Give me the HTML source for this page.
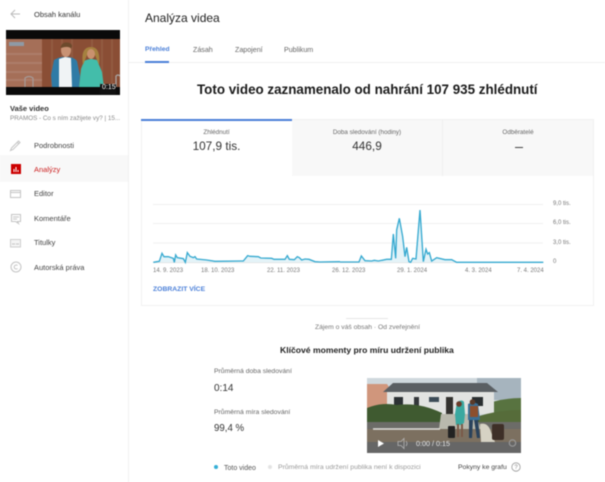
<!DOCTYPE html>
<html><head><meta charset="utf-8">
<style>
html,body{margin:0;padding:0;background:#fff}
#p{position:relative;width:605px;height:482px;overflow:hidden;background:#fff;font-family:"Liberation Sans",sans-serif;color:#333;filter:blur(.5px)}
.t{position:absolute;white-space:nowrap;line-height:1}
.b{position:absolute}
svg{position:absolute;overflow:visible}
</style></head><body><div id="p">
<div class="b" style="left:128px;top:0;width:1px;height:482px;background:#f1f1f1"></div>
<div class="b" style="left:0;top:155px;width:128px;height:27px;background:#f8f8f8"></div>
<svg style="left:0;top:0" width="30" height="30"><path d="M20 14H11.500M15 10l-4 4 4 4" fill="none" stroke="#bbb" stroke-width="1"/></svg>
<div class="t" style="left:34px;top:10.500px;font-size:7.500px;color:#333">Obsah kanálu</div>

<svg style="left:6px;top:30px" width="114" height="65" viewBox="0 0 114 65">
<rect width="114" height="65" fill="#0a0a0a"/>
<rect y="9" width="36" height="48" fill="#a56f58"/>
<rect x="36" y="9" width="78" height="48" fill="#8a4e35"/>
<path d="M46 9v48M56 9v48M66 9v48M86 9v48M96 9v48M106 9v48" stroke="#925a41" stroke-width="2"/>
<rect x="3" y="12" width="15" height="4" fill="#8f9aa5"/>
<path d="M0 24h36M0 33h36M0 42h36M0 50h36" stroke="#b5897a" stroke-width="2" opacity=".55"/>
<path d="M19 57V48q4-3 8 0v9" fill="none" stroke="#a59a98" stroke-width="1.200"/>
<path d="M110 57V46q2-2 4 0" fill="none" stroke="#aaa" stroke-width="1.200"/>
<path d="M46 57l-1-12 3-15q5-3 9-3h6q6 1 8 4l3 15-1 11z" fill="#2f7ba6"/>
<path d="M53 29l6-2 6 1 1 29H53z" fill="#f0f3f5"/>
<ellipse cx="60" cy="20" rx="5" ry="7" fill="#c89274"/>
<path d="M54.500 18q1-6 6-5.500 5.500 0 5.500 4l-1 2q-3-3-10-.5z" fill="#6d4a2c"/>
<path d="M73 57l2-18 3-8q4-2 8-2l5 1 5 12 2 15h-3l-1-5 0 5z" fill="#43bdaa"/>
<path d="M77 35q-3-18 8-18 10 0 8 18l-4-10h-8z" fill="#a5813f"/>
<ellipse cx="85" cy="24" rx="4" ry="5" fill="#c9916e"/>
<rect x="94" y="54" width="16" height="11" rx="1" fill="#111"/>
</svg>
<div class="t" style="left:102px;top:83.500px;font-size:7px;color:#fff">0:15</div>

<div class="t" style="left:10px;top:105px;font-size:7.500px;font-weight:bold;color:#333">Vaše video</div>
<div class="t" style="left:10px;top:115.500px;font-size:6.300px;color:#8a8a8a">PRAMOS - Co s ním zažijete vy? | 15...</div>

<svg style="left:0;top:130px" width="30" height="150">
<path d="M11.500 18l7-7 1.500 1.500-7 7-2.500 1zM17 12l1.500 1.500" fill="none" stroke="#c4c4c4" stroke-width="1"/>
<rect x="11" y="34" width="10" height="10" fill="#cc0000"/><path d="M14 42v-3M16 42v-5M18 42v-2" stroke="#fff" stroke-width="1"/>
<path d="M10.500 60.500h10v7h-10zM10.500 60.500h10v2h-10z" fill="none" stroke="#c4c4c4"/>
<path d="M11.500 84.500h9v7h-3l1 2-3-2h-4zM13 87h6M13 89h4" fill="none" stroke="#c4c4c4"/>
<rect x="10.500" y="109.500" width="10" height="7.500" fill="#f4f4f4" stroke="#cecece"/><path d="M12 114h3M16 114h3" stroke="#c4c4c4"/>
<circle cx="16" cy="137" r="5" fill="none" stroke="#c4c4c4"/><path d="M17.500 135.500a2 2 0 1 0 0 3" fill="none" stroke="#b4b4b4" stroke-width=".8"/>
</svg>
<div class="t" style="left:34px;top:141.500px;font-size:7.500px;color:#444">Podrobnosti</div>
<div class="t" style="left:34px;top:165.500px;font-size:7.500px;color:#cc2222">Analýzy</div>
<div class="t" style="left:34px;top:190px;font-size:7.500px;color:#444">Editor</div>
<div class="t" style="left:34px;top:214.500px;font-size:7.500px;color:#444">Komentáře</div>
<div class="t" style="left:34px;top:239px;font-size:7.500px;color:#444">Titulky</div>
<div class="t" style="left:34px;top:263.500px;font-size:7.500px;color:#444">Autorská práva</div>

<div class="t" style="left:145px;top:12px;font-size:12px;color:#222">Analýza videa</div>
<div class="t" style="left:145px;top:46.500px;font-size:6.700px;color:#4a7fd8;font-weight:bold">Přehled</div>
<div class="t" style="left:193px;top:46.500px;font-size:7.100px;color:#666">Zásah</div>
<div class="t" style="left:235px;top:46.500px;font-size:7.100px;color:#666">Zapojení</div>
<div class="t" style="left:284px;top:46.500px;font-size:7.100px;color:#666">Publikum</div>
<div class="b" style="left:129px;top:62px;width:476px;height:1px;background:#efefef"></div>
<div class="b" style="left:145px;top:60.500px;width:24px;height:2px;background:#4a7fd8"></div>

<div class="t" style="left:197px;top:82.500px;font-size:13.400px;font-weight:bold;color:#1a1a1a">Toto video zaznamenalo od nahrání 107 935 zhlédnutí</div>

<div class="b" style="left:141px;top:119px;width:453px;height:187px;border:1px solid #f1f1f1;box-sizing:border-box"></div>
<div class="b" style="left:292px;top:120px;width:301px;height:56px;background:#f8f8f8"></div>
<div class="b" style="left:442px;top:120px;width:1px;height:56px;background:#f0f0f0"></div>
<div class="b" style="left:141px;top:119px;width:151px;height:2px;background:#4a7fd8"></div>
<div class="t" style="left:141px;width:151px;text-align:center;top:130px;font-size:6.300px;color:#666">Zhlédnutí</div>
<div class="t" style="left:141px;width:151px;text-align:center;top:141px;font-size:11.800px;color:#333">107,9 tis.</div>
<div class="t" style="left:292px;width:150px;text-align:center;top:130px;font-size:6.300px;color:#666">Doba sledování (hodiny)</div>
<div class="t" style="left:292px;width:150px;text-align:center;top:141px;font-size:11.800px;color:#333">446,9</div>
<div class="t" style="left:443px;width:150px;text-align:center;top:130px;font-size:6.300px;color:#666">Odběratelé</div>
<div class="b" style="left:514.500px;top:146.500px;width:8px;height:1.300px;background:#444"></div>

<svg style="left:0;top:0" width="605" height="482">
<path d="M153 204.500H543M153 223.500H543M153 243H543" stroke="#f0f0f0" stroke-width="1"/>
<path d="M153 262.500H543" stroke="#ddd" stroke-width="1"/>
<g transform="translate(140,190) scale(.33333)">
<polygon fill="#e4f3f8" points="40,217 58,214 66,190 72,200 85,200 100,205 103,217 107,195 112,203 130,206 136,217 142,188 150,199 160,203 165,200 170,207 200,210 225,214 300,213 310,213 323,197 330,199 355,200 362,204 395,205 402,208 435,208 442,197 448,208 463,209 472,200 478,203 485,210 495,207 507,208 525,215 540,216 600,215 600,217 40,217"/>
<polyline fill="none" stroke="#35a9d0" stroke-width="4" points="40,217 58,214 66,190 72,200 85,200 100,205 103,217 107,195 112,203 130,206 136,217 142,188 150,199 160,203 165,200 170,207 200,210 225,214 300,213 310,213 323,197 330,199 355,200 362,204 395,205 402,208 435,208 442,197 448,208 463,209 472,200 478,203 485,210 495,207 507,208 525,215 540,216 600,215"/>
</g>
<g transform="translate(340,190) scale(.33333)">
<polygon fill="#e4f3f8" points="0,216 57,216 64,198 75,212 95,213 103,211 115,213 140,208 154,208 160,132 167,205 170,120 178,85 188,140 195,200 200,172 207,215 212,217 218,205 228,207 240,60 250,215 258,178 263,192 268,188 275,213 290,203 315,209 335,209 350,217 0,217"/>
<polyline fill="none" stroke="#35a9d0" stroke-width="4" points="0,216 57,216 64,198 75,212 95,213 103,211 115,213 140,208 154,208 160,132 167,205 170,120 178,85 188,140 195,200 200,172 207,215 212,217 218,205 228,207 240,60 250,215 258,178 263,192 268,188 275,213 290,203 315,209 335,209 350,217 610,217"/>
</g>
</svg>
<div class="t" style="left:553px;top:201px;font-size:6px;color:#777">9,0 tis.</div>
<div class="t" style="left:553px;top:220px;font-size:6px;color:#777">6,0 tis.</div>
<div class="t" style="left:553px;top:240px;font-size:6px;color:#777">3,0 tis.</div>
<div class="t" style="left:553px;top:259px;font-size:6px;color:#777">0</div>
<div class="t" style="left:153px;top:268px;font-size:6px;color:#777">14. 9. 2023</div>
<div class="t" style="left:201px;top:268px;font-size:6px;color:#777">18. 10. 2023</div>
<div class="t" style="left:267px;top:268px;font-size:6px;color:#777">22. 11. 2023</div>
<div class="t" style="left:332px;top:268px;font-size:6px;color:#777">26. 12. 2023</div>
<div class="t" style="left:397px;top:268px;font-size:6px;color:#777">29. 1. 2024</div>
<div class="t" style="left:465px;top:268px;font-size:6px;color:#777">4. 3. 2024</div>
<div class="t" style="left:517px;top:268px;font-size:6px;color:#777">7. 4. 2024</div>
<div class="t" style="left:153px;top:287px;font-size:6.800px;font-weight:bold;color:#4a7fd8">ZOBRAZIT VÍCE</div>

<div class="b" style="left:346px;top:318px;width:42px;height:1px;background:#e6e6e6"></div>
<div class="t" style="left:315px;top:325px;font-size:6.750px;color:#777">Zájem o váš obsah · Od zveřejnění</div>
<div class="t" style="left:280px;top:345.500px;font-size:8.600px;font-weight:bold;color:#222">Klíčové momenty pro míru udržení publika</div>

<div class="t" style="left:214px;top:368.500px;font-size:6.800px;color:#666">Průměrná doba sledování</div>
<div class="t" style="left:214px;top:384px;font-size:10px;color:#333">0:14</div>
<div class="t" style="left:214px;top:409.500px;font-size:6.800px;color:#666">Průměrná míra sledování</div>
<div class="t" style="left:214px;top:424px;font-size:9.700px;color:#333">99,4 %</div>

<svg style="left:367px;top:378px" width="154" height="75" viewBox="0 0 154 75">
<rect width="154" height="75" fill="#cfd8dd"/>
<rect x="110" y="0" width="44" height="22" fill="#a6b4be"/>
<path d="M125 24q15-4 29-4v24h-29z" fill="#587340"/>
<path d="M0 6h20l4 6-3 22H0z" fill="#d0967c"/>
<path d="M16 14L26 5H120L131 14z" fill="#5a5f63"/>
<rect x="20" y="14" width="107" height="22" fill="#e2e3e1"/>
<rect x="27" y="19" width="9" height="9" fill="#2c3134"/>
<rect x="47" y="19" width="5" height="9" fill="#33373a"/>
<rect x="62" y="19" width="10" height="5" fill="#3d4c58"/>
<rect x="79" y="19" width="7" height="17" fill="#33322f"/>
<rect x="105" y="19" width="11" height="9" fill="#2a2e30"/>
<rect y="40" width="154" height="5" fill="#46582f"/>
<path d="M0 30q14-6 30-3 22-3 45 8v9H0z" fill="#3f5a30"/>
<path d="M112 38q20-6 42-6v12h-42z" fill="#566c3a"/>
<rect y="44" width="154" height="7" fill="#6c6c68"/>
<rect y="51" width="154" height="13" fill="#7c7060"/>
<path d="M74 36h34l6 15H72z" fill="#b9b9ad"/>
<path d="M90 24q5-3 7 0l1 12 -1 9-3 2h-5l-1-11z" fill="#3aa8a0"/>
<rect x="90" y="46" width="2" height="13" fill="#7a5a48"/><rect x="94" y="46" width="2" height="13" fill="#7a5a48"/>
<circle cx="92" cy="26" r="2.800" fill="#6b3b2a"/>
<path d="M101 26q5-3 10 0l2 16h-12z" fill="#3a6f96"/>
<rect x="103" y="28" width="8" height="11" fill="#8c4f2e"/>
<path d="M102 42h4l-1 18h-3zM107 42h4l2 18h-3z" fill="#29425c"/>
<circle cx="105.500" cy="24" r="2.800" fill="#5a3b2a"/>
<rect x="81" y="48" width="7" height="12" rx="1" fill="#222"/>
<path d="M113 46q8-2 11 8l4 10h-14z" fill="#d6d2c4"/>
<rect x="125" y="46" width="12" height="16" rx="2" fill="#3e2f27"/>
<path d="M6 51H73" stroke="#e0e0dc" stroke-width="1.500"/>
<rect y="64" width="154" height="11" fill="#666"/>
<path d="M11 62l6 3.500-6 3.500z" fill="#fff"/>
<path d="M31 63.500h3l3-3v10l-3-3h-3zM39 63q2 2.500 0 5" fill="none" stroke="#b4b4b4" stroke-width=".8"/>
<circle cx="145.500" cy="65" r="3.200" fill="none" stroke="#999" stroke-width="1.200"/>
</svg>
<div class="t" style="left:416px;top:439.500px;font-size:7.200px;color:#e6e6e6">0:00 / 0:15</div>

<div class="b" style="left:214px;top:465px;width:4px;height:4px;border-radius:50%;background:#35aed6"></div>
<div class="t" style="left:224px;top:464.500px;font-size:7px;color:#555">Toto video</div>
<div class="b" style="left:268px;top:465px;width:4px;height:4px;border-radius:50%;background:#e4e4e4"></div>
<div class="t" style="left:278px;top:464.500px;font-size:6.850px;color:#999">Průměrná míra udržení publika není k dispozici</div>
<div class="t" style="left:458px;top:464.500px;font-size:6.800px;color:#444">Pokyny ke grafu</div>
<svg style="left:510px;top:461px" width="12" height="12"><circle cx="6" cy="6" r="4.200" fill="none" stroke="#999" stroke-width=".8"/><text x="6" y="8.200" font-size="6" text-anchor="middle" fill="#888" font-family="Liberation Sans">?</text></svg>
</div></body></html>
